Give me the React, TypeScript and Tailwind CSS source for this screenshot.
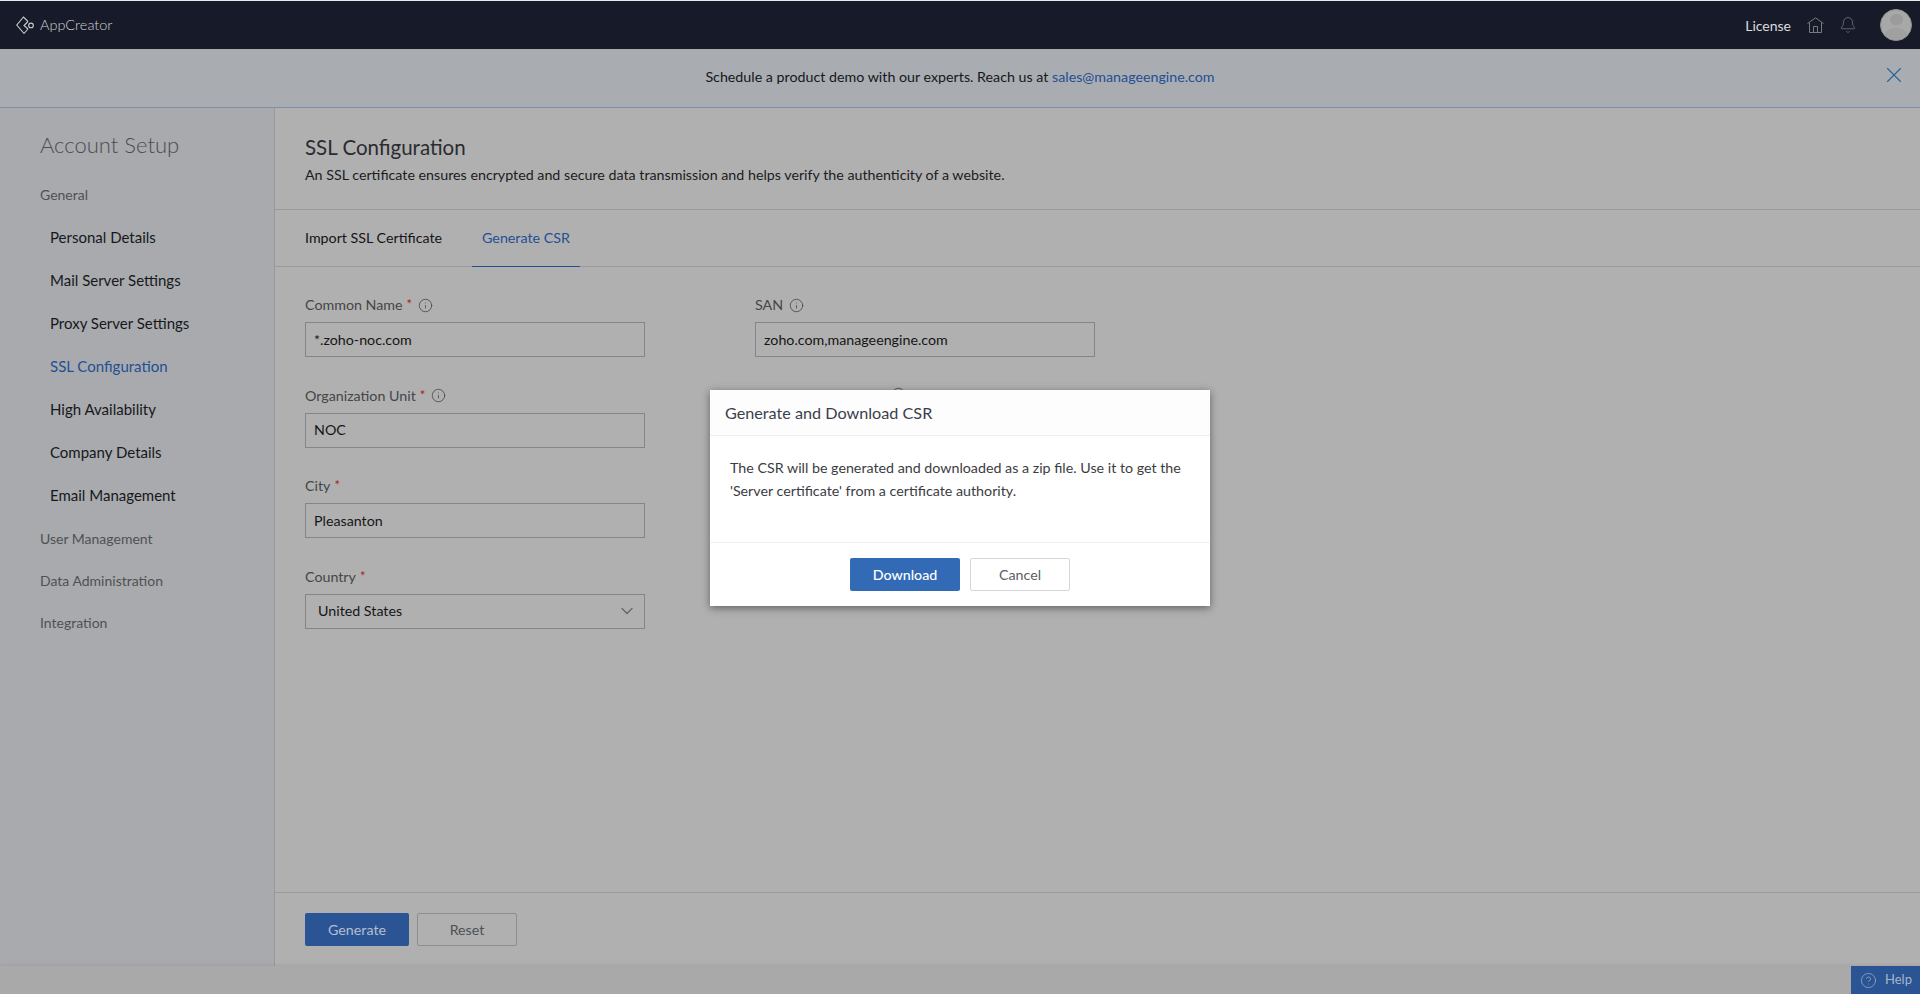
import { Bell, ChevronDown, CircleHelp, Info, X } from 'lucide-react'

const generalItems = [
  'Personal Details',
  'Mail Server Settings',
  'Proxy Server Settings',
  'SSL Configuration',
  'High Availability',
  'Company Details',
  'Email Management',
]

function Logo() {
  return (
    <svg width="19" height="19" viewBox="0 0 19 19" fill="none" stroke="#c9cbcf" strokeWidth="1.1">
      <path d="M12 5.5 7.5 1 .8 9l7.2 8.5 4-4.5" />
      <path d="M12 5.5 8 9.5l4 3.5" />
      <circle cx="15" cy="9.4" r="2.3" />
    </svg>
  )
}

function HomeIcon() {
  return (
    <svg width="17" height="16" viewBox="0 0 17 16" fill="none" stroke="#767982" strokeWidth="1">
      <path d="M.5 6.5 8.5.8l8 5.7" />
      <path d="M2.5 5.5v10h12v-10" />
      <path d="M6.5 15.5v-6h4v6" />
    </svg>
  )
}

function Avatar() {
  return (
    <div className="flex h-8 w-8 flex-col items-center overflow-hidden rounded-full border border-[#909090] bg-[#a8a8a8]">
      <div className="mt-[4px] h-[13px] w-[13px] rounded-full bg-[#9b9b9b]" />
      <div className="mt-[3px] h-[14px] w-[26px] rounded-t-full bg-[#a0a0a0]" />
    </div>
  )
}

function Label({ text, required, info }: { text: string; required?: boolean; info?: boolean }) {
  return (
    <div className="flex h-[18px] items-center text-[14.25px] text-[#444649]">
      <span>{text}</span>
      {required && <span className="ml-[4px] text-[13px] text-[#a32222]">*</span>}
      {info && <Info size={15} strokeWidth={1.2} className="ml-[6px] text-[#3d3f42]" />}
    </div>
  )
}

function Field({ label, value, required, info }: { label: string; value: string; required?: boolean; info?: boolean }) {
  return (
    <div className="flex w-[340px] flex-col gap-[8px]">
      <Label text={label} required={required} info={info} />
      <div className="flex h-[35px] items-center border border-[#858585] pl-[8px] text-[14.25px] text-[#161616]">
        {value}
      </div>
    </div>
  )
}

export default function App() {
  return (
    <div className="relative flex h-screen flex-col overflow-hidden bg-[#b0b0b0] font-['Lato',sans-serif]">
      <div className="h-px bg-[#e9e9e9]" />
      <header className="flex h-[48px] items-center bg-[#171b29] pl-[16px] pr-[8px]">
        <Logo />
        <span className="ml-[5px] text-[14.5px] font-light text-[#d0d2d5]">AppCreator</span>
        <div className="ml-auto flex items-center">
          <span className="text-[14px] text-[#dcdcdc]">License</span>
          <div className="ml-[16px]">
            <HomeIcon />
          </div>
          <Bell size={18} strokeWidth={1} className="ml-[15px] text-[#767982]" />
          <div className="ml-[23px]">
            <Avatar />
          </div>
        </div>
      </header>
      <div className="relative flex h-[59px] items-center justify-center border-b border-[#7a91a8] bg-[#a9adb2] pb-[3px] text-[14.25px] text-[#161719]">
        <span>
          Schedule a product demo with our experts. Reach us at{' '}
          <span className="text-[#234f94]">sales@manageengine.com</span>
        </span>
        <X size={26} strokeWidth={1} className="absolute right-[13px] top-[13px] text-[#2a6296]" />
      </div>
      <div className="flex min-h-0 flex-1">
        <aside className="w-[275px] shrink-0 border-r border-[#979a9d] bg-[#a8aaad] pl-[40px]">
          <h1 className="mt-[22px] text-[22px] font-light leading-[30px] text-[#4b4d50]">Account Setup</h1>
          <div className="mt-[25px] text-[14px] leading-[20px] text-[#4f5154]">General</div>
          <ul className="mt-[21px] flex flex-col gap-[20px] pl-[10px]">
            {generalItems.map((item) => (
              <li
                key={item}
                className={
                  item === 'SSL Configuration'
                    ? 'text-[15px] leading-[23px] text-[#234f94]'
                    : 'text-[15px] leading-[23px] text-[#16181b]'
                }
              >
                {item}
              </li>
            ))}
          </ul>
          <div className="mt-[22px] flex flex-col gap-[22px] text-[14px] leading-[20px] text-[#4f5154]">
            <div>User Management</div>
            <div>Data Administration</div>
            <div>Integration</div>
          </div>
        </aside>
        <main className="flex min-w-0 flex-1 flex-col">
          <div className="h-[102px] border-b border-[#9b9b9b] pl-[30px] pt-[26px]">
            <h2 className="text-[20.5px] leading-[26px] text-[#2a2c30]">SSL Configuration</h2>
            <p className="mt-[6px] text-[14.25px] leading-[18px] text-[#1b1c1e]">
              An SSL certificate ensures encrypted and secure data transmission and helps verify the authenticity of a
              website.
            </p>
          </div>
          <div className="flex h-[57px] border-b border-[#9b9b9b] pl-[30px] text-[14.25px]">
            <div className="flex items-center pr-[30px] text-[#131416]">Import SSL Certificate</div>
            <div className="-mb-px flex items-center border-b border-[#234f94] px-[10px] text-[#234f94]">
              Generate CSR
            </div>
          </div>
          <div className="flex flex-1 gap-[110px] pl-[30px] pt-[29px]">
            <div className="flex flex-col gap-[29.5px]">
              <Field label="Common Name" value="*.zoho-noc.com" required info />
              <Field label="Organization Unit" value="NOC" required info />
              <Field label="City" value="Pleasanton" required />
              <div className="flex w-[340px] flex-col gap-[8px]">
                <Label text="Country" required />
                <div className="flex h-[35px] items-center justify-between border border-[#858585] pl-[12px] pr-[7px] text-[14.25px] text-[#161616]">
                  United States
                  <ChevronDown size={20} strokeWidth={1.5} className="text-[#666666]" />
                </div>
              </div>
            </div>
            <div className="flex flex-col gap-[29.5px]">
              <Field label="SAN" value="zoho.com,manageengine.com" info />
              <div className="pl-[136px]">
                <Info size={15} strokeWidth={1.2} className="text-[#3d3f42]" />
              </div>
            </div>
          </div>
          <div className="flex h-[74px] gap-[8px] border-t border-[#9b9b9b] pl-[30px] pt-[20px]">
            <button className="h-[33px] w-[104px] rounded-[2px] bg-[#2a5494] text-[14.25px] text-[#b4bfd0]">Generate</button>
            <button className="h-[33px] w-[100px] rounded-[2px] border border-[#8e8e8e] text-[14.25px] text-[#4d5054]">
              Reset
            </button>
          </div>
        </main>
      </div>
      <div className="flex h-[28px] justify-end bg-[#a9a9a9] shadow-[0_-1px_3px_rgba(0,0,0,0.08)]">
        <div className="flex w-[69px] items-center gap-[8px] bg-[#2a5494] pl-[9px] text-[13px] text-[#a7b4c9]">
          <CircleHelp size={17} strokeWidth={1} />
          Help
        </div>
      </div>
      <div className="absolute left-[710px] top-[390px] flex h-[216px] w-[500px] flex-col bg-white shadow-[0_2px_8px_rgba(0,0,0,0.45)]">
        <div className="flex h-[46px] items-center border-b border-[#f0f0f0] bg-[#fdfdfd] pl-[15px] pt-[1px] text-[16.2px] text-[#3a3f4c]">
          Generate and Download CSR
        </div>
        <div className="h-[107px] border-b border-[#f0f0f0] px-[20px] pt-[20px] text-[14.25px] leading-[23px] text-[#3b3c3f]">
          The CSR will be generated and downloaded as a zip file. Use it to get the
          <br />
          'Server certificate' from a certificate authority.
        </div>
        <div className="flex flex-1 justify-center gap-[10px] pt-[15px]">
          <button className="h-[33px] w-[110px] rounded-[2px] bg-[#326ab6] text-[14.25px] font-medium text-white">
            Download
          </button>
          <button className="h-[33px] w-[100px] rounded-[2px] border border-[#d5d7da] text-[14.25px] text-[#5c6068]">
            Cancel
          </button>
        </div>
      </div>
    </div>
  )
}
